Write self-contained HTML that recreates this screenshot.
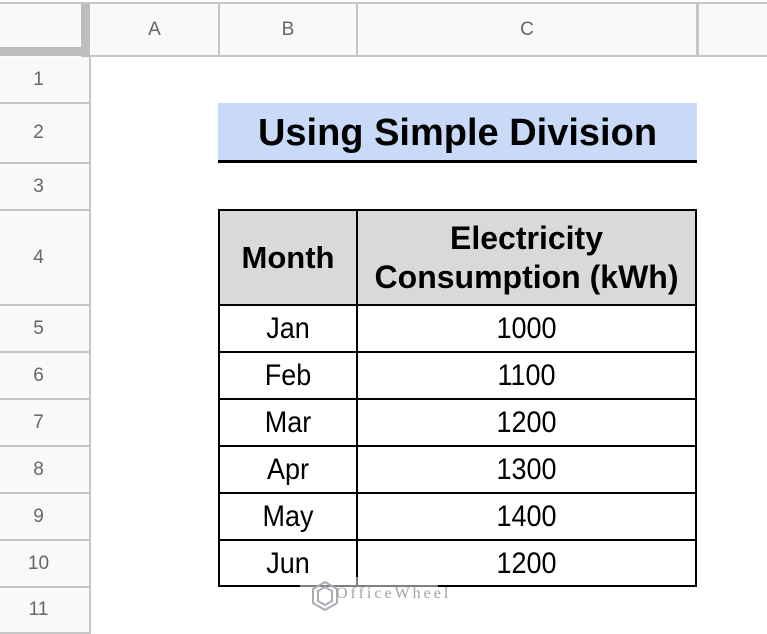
<!DOCTYPE html>
<html><head><meta charset="utf-8"><style>
body{margin:0;width:767px;height:634px;overflow:hidden;background:#fff;font-family:"Liberation Sans",Arial,sans-serif;position:relative}
.a{position:absolute;box-sizing:border-box}
.hd{background:#f8f9fa;color:#666;font-size:19px;display:flex;align-items:center;justify-content:center}
.rh{padding-right:12px}
.t{display:flex;align-items:center;justify-content:center;color:#000;text-align:center}
.b{font-size:27px;transform:scaleY(1.1)}
</style></head><body>
<div class="a" style="left:0;top:2px;width:767px;height:2px;background:#c6c6c6"></div>
<div class="a hd" style="left:0;top:4px;width:81px;height:43px"></div>
<div class="a" style="left:81px;top:4px;width:9px;height:53px;background:#bdbdbd"></div>
<div class="a" style="left:0;top:47px;width:90px;height:9px;background:#bdbdbd"></div>
<div class="a hd" style="left:91px;top:4px;width:127px;height:51px">A</div>
<div class="a hd" style="left:220px;top:4px;width:136px;height:51px">B</div>
<div class="a hd" style="left:358px;top:4px;width:338px;height:51px">C</div>
<div class="a hd" style="left:699px;top:4px;width:68px;height:51px"></div>
<div class="a" style="left:218px;top:4px;width:2px;height:53px;background:#c6c6c6"></div>
<div class="a" style="left:356px;top:4px;width:2px;height:53px;background:#c6c6c6"></div>
<div class="a" style="left:696px;top:4px;width:3px;height:53px;background:#c6c6c6"></div>
<div class="a" style="left:90px;top:55px;width:677px;height:2px;background:#c6c6c6"></div>
<div class="a" style="left:89px;top:57px;width:2px;height:577px;background:#c6c6c6"></div>
<div class="a hd rh" style="left:0;top:57px;width:89px;height:45px">1</div>
<div class="a" style="left:0;top:102px;width:89px;height:2px;background:#c6c6c6"></div>
<div class="a hd rh" style="left:0;top:104px;width:89px;height:58px">2</div>
<div class="a" style="left:0;top:162px;width:89px;height:2px;background:#c6c6c6"></div>
<div class="a hd rh" style="left:0;top:164px;width:89px;height:45px">3</div>
<div class="a" style="left:0;top:209px;width:89px;height:2px;background:#c6c6c6"></div>
<div class="a hd rh" style="left:0;top:211px;width:89px;height:93px">4</div>
<div class="a" style="left:0;top:304px;width:89px;height:2px;background:#c6c6c6"></div>
<div class="a hd rh" style="left:0;top:306px;width:89px;height:45px">5</div>
<div class="a" style="left:0;top:351px;width:89px;height:2px;background:#c6c6c6"></div>
<div class="a hd rh" style="left:0;top:353px;width:89px;height:45px">6</div>
<div class="a" style="left:0;top:398px;width:89px;height:2px;background:#c6c6c6"></div>
<div class="a hd rh" style="left:0;top:400px;width:89px;height:45px">7</div>
<div class="a" style="left:0;top:445px;width:89px;height:2px;background:#c6c6c6"></div>
<div class="a hd rh" style="left:0;top:447px;width:89px;height:45px">8</div>
<div class="a" style="left:0;top:492px;width:89px;height:2px;background:#c6c6c6"></div>
<div class="a hd rh" style="left:0;top:494px;width:89px;height:45px">9</div>
<div class="a" style="left:0;top:539px;width:89px;height:2px;background:#c6c6c6"></div>
<div class="a hd rh" style="left:0;top:541px;width:89px;height:45px">10</div>
<div class="a" style="left:0;top:586px;width:89px;height:2px;background:#c6c6c6"></div>
<div class="a hd rh" style="left:0;top:588px;width:89px;height:44px">11</div>
<div class="a" style="left:0;top:632px;width:89px;height:2px;background:#c6c6c6"></div>
<div class="a t" style="left:218px;top:103px;width:479px;height:57px;background:#c9daf8;font-weight:bold;font-size:38px;padding-top:4px">Using Simple Division</div>
<div class="a" style="left:218px;top:160px;width:479px;height:3px;background:#000"></div>
<div class="a" style="left:218px;top:209px;width:479px;height:378px;border:2px solid #000"></div>
<div class="a t" style="left:220px;top:211px;width:136px;height:93px;background:#d9d9d9;font-weight:bold;font-size:31px">Month</div>
<div class="a t" style="left:358px;top:211px;width:337px;height:93px;background:#d9d9d9;font-weight:bold;font-size:32px;line-height:39px">Electricity<br>Consumption (kWh)</div>
<div class="a" style="left:356px;top:211px;width:2px;height:374px;background:#000"></div>
<div class="a" style="left:220px;top:304px;width:475px;height:2px;background:#000"></div>
<div class="a" style="left:220px;top:351px;width:475px;height:2px;background:#000"></div>
<div class="a" style="left:220px;top:398px;width:475px;height:2px;background:#000"></div>
<div class="a" style="left:220px;top:445px;width:475px;height:2px;background:#000"></div>
<div class="a" style="left:220px;top:492px;width:475px;height:2px;background:#000"></div>
<div class="a" style="left:220px;top:539px;width:475px;height:2px;background:#000"></div>
<div class="a t" style="left:220px;top:306px;width:136px;height:45px"><span class="b">Jan</span></div>
<div class="a t" style="left:358px;top:306px;width:337px;height:45px"><span class="b">1000</span></div>
<div class="a t" style="left:220px;top:353px;width:136px;height:45px"><span class="b">Feb</span></div>
<div class="a t" style="left:358px;top:353px;width:337px;height:45px"><span class="b">1100</span></div>
<div class="a t" style="left:220px;top:400px;width:136px;height:45px"><span class="b">Mar</span></div>
<div class="a t" style="left:358px;top:400px;width:337px;height:45px"><span class="b">1200</span></div>
<div class="a t" style="left:220px;top:447px;width:136px;height:45px"><span class="b">Apr</span></div>
<div class="a t" style="left:358px;top:447px;width:337px;height:45px"><span class="b">1300</span></div>
<div class="a t" style="left:220px;top:494px;width:136px;height:45px"><span class="b">May</span></div>
<div class="a t" style="left:358px;top:494px;width:337px;height:45px"><span class="b">1400</span></div>
<div class="a t" style="left:220px;top:541px;width:136px;height:44px"><span class="b">Jun</span></div>
<div class="a t" style="left:358px;top:541px;width:337px;height:44px"><span class="b">1200</span></div>
<div class="a" style="left:300px;top:577px;width:138px;height:32px;background:rgba(255,255,255,0.5)"></div>
<svg class="a" style="left:311px;top:580px" width="28" height="32" viewBox="0 0 28 32"><path d="M14 2 L26 9 L26 23 L14 30 L2 23 L2 9 Z M14 7 L21 11 L21 21 L14 25 L7 21 L7 11 Z" fill="none" stroke="#a9adb5" stroke-width="2"/></svg>
<div class="a" style="left:336px;top:585px;font-family:'Liberation Serif',serif;font-size:16px;letter-spacing:3px;color:#9ea2aa">OfficeWheel</div>
</body></html>
